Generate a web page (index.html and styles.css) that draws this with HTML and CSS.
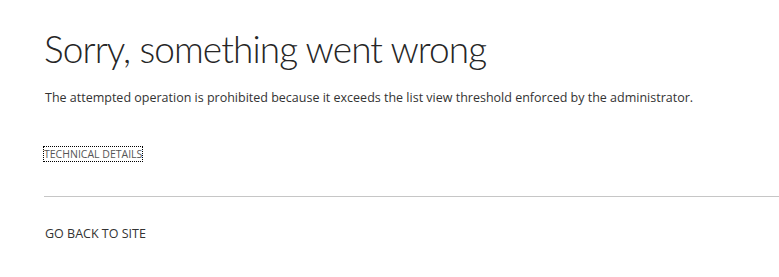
FILE: index.html
```html
<!DOCTYPE html>
<html>
<head>
<meta charset="utf-8">
<link rel="stylesheet" href="styles.css">
</head>
<body>
<div class="page">
  <h1 class="title">Sorry, something went wrong</h1>
  <p class="message">The attempted operation is prohibited because it exceeds the list view threshold enforced by the administrator.</p>
  <div class="details"><a class="details-link" href="#">TECHNICAL DETAILS</a></div>
  <hr class="divider">
  <div class="back"><a class="back-link" href="#">GO BACK TO SITE</a></div>
</div>
</body>
</html>
```
FILE: styles.css
```css
html, body {
  margin: 0;
  padding: 0;
  background: #ffffff;
}
.page {
  padding: 26px 0 0 44px;
  font-family: "Open Sans", "Noto Sans", sans-serif;
  color: #333333;
}
.title {
  margin: 0;
  font-family: "Lato", "Open Sans", sans-serif;
  font-weight: 300;
  font-size: 37px;
  line-height: 46px;
  letter-spacing: -0.9px;
  color: #262626;
}
.message {
  margin: 18px 0 0 1px;
  font-size: 12.5px;
  line-height: 16px;
  color: #333333;
}
.details {
  margin-top: 42px;
  font-size: 10.5px;
  line-height: 13px;
}
.details-link {
  color: #555555;
  text-decoration: none;
  outline: 1px dotted #000000;
}
.divider {
  margin: 35px 0 0 0;
  border: 0;
  border-top: 1px solid #c6c6c6;
  height: 0;
}
.back {
  margin-top: 29px;
  margin-left: 1px;
  font-size: 12.5px;
  line-height: 16px;
}
.back-link {
  color: #333333;
  text-decoration: none;
}
```
